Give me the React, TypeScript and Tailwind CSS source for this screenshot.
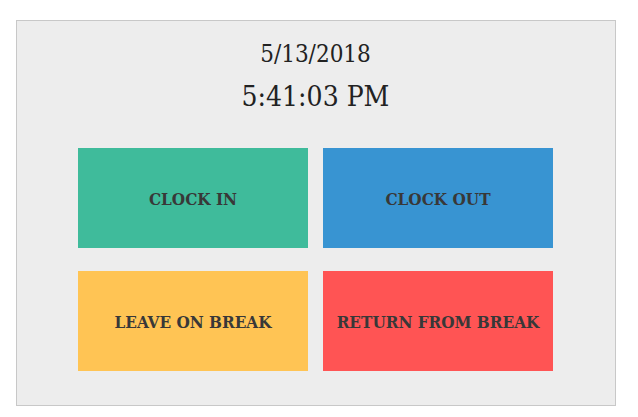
const buttons = [
  { label: 'CLOCK IN', color: 'bg-[#3fbb9b]' },
  { label: 'CLOCK OUT', color: 'bg-[#3894d2]' },
  { label: 'LEAVE ON BREAK', color: 'bg-[#ffc454]' },
  { label: 'RETURN FROM BREAK', color: 'bg-[#ff5454]' },
];

export default function App() {
  return (
    <div className="min-h-screen bg-white pt-5 pl-4 font-['DejaVu_Serif_Condensed','DejaVu_Serif',serif] text-[#222]">
      <div className="flex h-[386px] w-[600px] flex-col items-center border border-[#c8c8c8] bg-[#ededed] pt-[18px] pr-px">
        <div className="text-[24px] leading-[30px]">5/13/2018</div>
        <div className="mt-[10px] text-[28px] leading-[36px]">5:41:03 PM</div>
        <div className="mt-[33px] grid grid-cols-[230px_230px] gap-x-[15px] gap-y-[23px]">
          {buttons.map(b => (
            <button
              key={b.label}
              className={`flex h-[100px] items-center justify-center pt-[3px] ${b.color} text-[17px] font-bold text-[#383838]`}
            >
              {b.label}
            </button>
          ))}
        </div>
      </div>
    </div>
  );
}
